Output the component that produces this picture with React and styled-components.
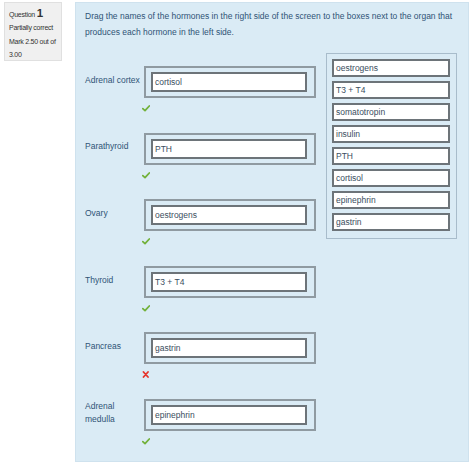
import React from "react";
import styled, { createGlobalStyle } from "styled-components";

const Global = createGlobalStyle`
  html, body { margin: 0; padding: 0; background: #ffffff; }
  body { font-family: "Liberation Sans", Arial, sans-serif; }
`;

const Page = styled.div`
  display: flex;
  align-items: flex-start;
  gap: 13px;
  padding: 2px 5px 0 4px;
  width: 474px;
  height: 466px;
  box-sizing: border-box;
`;

const Info = styled.div`
  width: 58px;
  height: 59px;
  box-sizing: border-box;
  background: #f0f0f0;
  border: 1px solid #e0e0e0;
  padding: 4px 3px 0 4px;
  color: #333;
  font-size: 7px;
  letter-spacing: -0.25px;
  line-height: 13px;
`;

const QNum = styled.span`
  font-weight: bold;
  font-size: 11.5px;
  letter-spacing: 0;
`;

const InfoLine = styled.div`
  margin-top: ${(p) => p.$gap || 0}px;
  line-height: ${(p) => p.$lh || 13}px;
`;

const Main = styled.div`
  width: 394px;
  height: 460px;
  box-sizing: border-box;
  background: #daebf5;
  border: 1px solid #cfe2ee;
  padding: 5px 11px 0 9px;
`;

const Prompt = styled.div`
  color: #2f5376;
  font-size: 8.5px;
  line-height: 16px;
`;

const Body = styled.div`
  display: flex;
  justify-content: space-between;
  align-items: flex-start;
  margin-top: 13px;
`;

const Answers = styled.div`
  display: flex;
  flex-direction: column;
  padding-top: 13px;
`;

const Row = styled.div`
  display: grid;
  grid-template-columns: 59px 172px;
  grid-template-rows: 32px auto;
  height: 66.6px;
`;

const Label = styled.div`
  align-self: center;
  margin-bottom: 3px;
  color: #2f5376;
  font-size: 8.5px;
  line-height: 13.5px;
`;

const DropOuter = styled.div`
  box-sizing: border-box;
  height: 32px;
  border: 2px solid #8f9aa1;
  padding: 4px 7px 4px 5px;
`;

const Chip = styled.div`
  box-sizing: border-box;
  height: ${(p) => p.$h}px;
  width: ${(p) => (p.$w ? p.$w + "px" : "auto")};
  border: 2px solid #6d7479;
  background: #fff;
  color: #3a4d60;
  font-size: 8.5px;
  display: flex;
  align-items: center;
  padding-left: 2px;
`;

const Feedback = styled.div`
  grid-column: 2;
  margin-top: 7px;
  margin-left: -2px;
  height: 7px;
  display: flex;
`;

const Pool = styled.div`
  width: 131px;
  box-sizing: border-box;
  border: 1px solid #a8bccb;
  padding: 5px 6px 7px 5px;
  display: flex;
  flex-direction: column;
  gap: 4px;
`;

const Tick = () => (
  <svg width="8" height="7" viewBox="0 0 8 7">
    <path d="M0.8 3.6 L3 5.6 L7.3 1" fill="none" stroke="#72b13a" strokeWidth="1.8" strokeLinecap="round" strokeLinejoin="round" />
  </svg>
);

const Cross = () => (
  <svg width="8" height="7" viewBox="0 0 8 7">
    <path d="M1.5 1 L6 6 M6 1 L1.5 6" fill="none" stroke="#e5342b" strokeWidth="1.8" strokeLinecap="round" />
  </svg>
);

const rows = [
  { label: "Adrenal cortex", value: "cortisol", ok: true },
  { label: "Parathyroid", value: "PTH", ok: true },
  { label: "Ovary", value: "oestrogens", ok: true },
  { label: "Thyroid", value: "T3 + T4", ok: true },
  { label: "Pancreas", value: "gastrin", ok: false },
  { label: "Adrenal medulla", value: "epinephrin", ok: true },
];

const pool = ["oestrogens", "T3 + T4", "somatotropin", "insulin", "PTH", "cortisol", "epinephrin", "gastrin"];

export default function App() {
  return (
    <>
      <Global />
      <Page>
        <Info>
          <InfoLine>
            Question <QNum>1</QNum>
          </InfoLine>
          <InfoLine>Partially correct</InfoLine>
          <InfoLine $gap={2} $lh={12.5}>Mark 2.50 out of 3.00</InfoLine>
        </Info>
        <Main>
          <Prompt>
            Drag the names of the hormones in the right side of the screen to the boxes next to the organ that
            produces each hormone in the left side.
          </Prompt>
          <Body>
            <Answers>
              {rows.map((r) => (
                <Row key={r.label}>
                  <Label>{r.label}</Label>
                  <DropOuter>
                    <Chip $h={20}>{r.value}</Chip>
                  </DropOuter>
                  <Feedback>{r.ok ? <Tick /> : <Cross />}</Feedback>
                </Row>
              ))}
            </Answers>
            <Pool>
              {pool.map((p) => (
                <Chip key={p} $h={18} $w={118}>
                  {p}
                </Chip>
              ))}
            </Pool>
          </Body>
        </Main>
      </Page>
    </>
  );
}
